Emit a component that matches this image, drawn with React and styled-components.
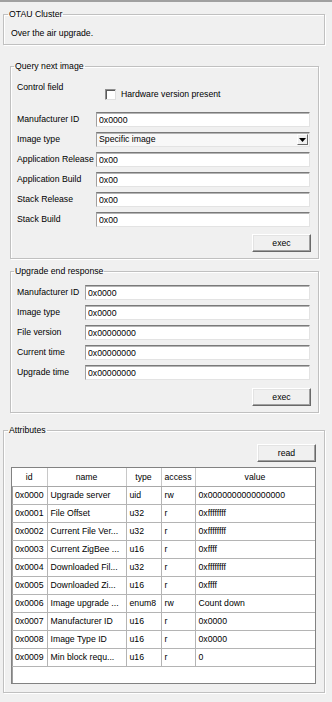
import React from 'react';
import styled, { createGlobalStyle } from 'styled-components';

const FONT = '"Liberation Sans", Arial, sans-serif';
const SIZE = '8.7px';

const Global = createGlobalStyle`
  html, body { margin: 0; padding: 0; background: #f0f0f0; }
  body { font-family: ${FONT}; font-size: ${SIZE}; color: #000; }
  * { box-sizing: border-box; }
`;

const Page = styled.div`
  width: 332px;
  height: 702px;
  border-top: 2px solid #a0a0a0;
  padding: 0 7px 0 3px;
  display: flex;
  flex-direction: column;
  overflow: hidden;
`;

const Group = styled.fieldset`
  margin: ${p => p.$mt}px ${p => p.$mx || 0}px 0 ${p => p.$mx ? p.$mx + 1 : 0}px;
  padding: ${p => p.$pad};
  border: 1px solid #c0c0c0;
  box-shadow: inset 1px 1px 0 #fff, 1px 1px 0 #fff;
  min-width: 0;
`;

const Legend = styled.legend`
  padding: 0 1px;
  margin-left: -3px;
  font-size: ${SIZE};
  line-height: 11px;
`;

const Text = styled.div`
  line-height: 11px;
`;

const Form = styled.div`
  display: grid;
  grid-template-columns: ${p => p.$label}px 1fr;
  row-gap: 5px;
  align-items: center;
`;

const Label = styled.span`
  line-height: 11px;
  white-space: nowrap;
  align-self: ${p => p.$top ? 'start' : 'center'};
`;

const CheckCell = styled.label`
  display: flex;
  align-items: center;
  gap: 5px;
  height: 25px;
  margin-left: 9px;
  line-height: 11px;
`;

const CheckBox = styled.span`
  width: 11px;
  height: 11px;
  background: #fff;
  border: 1px solid;
  border-color: #8e8e8e #e0e0e0 #e0e0e0 #8e8e8e;
  box-shadow: inset 1px 1px 0 #5a5a5a;
`;

const TextField = styled.input`
  width: 100%;
  height: 15px;
  margin: 0;
  padding: 0 2px;
  font-family: ${FONT};
  font-size: ${SIZE};
  color: #000;
  background: #fff;
  border: 1px solid;
  border-color: #7a7a7a #e3e3e3 #e3e3e3 #a0a0a0;
  box-shadow: inset 0 1px 0 #b4b4b4;
  outline: none;
`;

const Combo = styled.div`
  height: 15px;
  display: flex;
  align-items: center;
  justify-content: space-between;
  padding: 0 1px 0 2px;
  background: #f8f8f8;
  border: 1px solid;
  border-color: #7a7a7a #e3e3e3 #e3e3e3 #a0a0a0;
  box-shadow: inset 0 1px 0 #b4b4b4;
  line-height: 11px;
`;

const DropButton = styled.span`
  width: 11px;
  height: 11px;
  display: flex;
  align-items: center;
  justify-content: center;
  background: #f0f0f0;
  border: 1px solid;
  border-color: #fff #696969 #696969 #fff;
`;

const ButtonRow = styled.div`
  grid-column: 1 / -1;
  display: flex;
  justify-content: flex-end;
  margin: ${p => p.$m || '2px -1px 0 0'};
`;

const Button = styled.button`
  width: 59px;
  height: 18px;
  margin: 0;
  padding: 0;
  font-family: ${FONT};
  font-size: ${SIZE};
  color: #000;
  background: #f0f0f0;
  border: 1px solid;
  border-color: #fff #696969 #696969 #fff;
  box-shadow: inset -1px -1px 0 #a0a0a0, inset 1px 1px 0 #e3e3e3;
`;

const TableFrame = styled.div`
  margin-top: 5px;
  height: 217px;
  background: #fff;
  border: 1px solid #828282;
  box-shadow: inset 1px 0 0 #a0a0a0;
  overflow: hidden;
`;

const Table = styled.table`
  border-collapse: collapse;
  table-layout: fixed;
  width: 303px;
`;

const Th = styled.th`
  height: 18px;
  padding: 0 3px;
  font-weight: normal;
  text-align: center;
  background: #fff;
  border-right: 1px solid #c8c8c8;
  border-bottom: 1px solid #a8a8a8;
  white-space: nowrap;
  overflow: hidden;
`;

const Td = styled.td`
  height: 18px;
  padding: 0 3px;
  border-right: 1px solid #b4b4b4;
  border-bottom: 1px solid #b4b4b4;
  white-space: nowrap;
  overflow: hidden;
`;

const queryFields = [
  ['Application Release', '0x00'],
  ['Application Build', '0x00'],
  ['Stack Release', '0x00'],
  ['Stack Build', '0x00'],
];

const endFields = [
  ['Manufacturer ID', '0x0000'],
  ['Image type', '0x0000'],
  ['File version', '0x00000000'],
  ['Current time', '0x00000000'],
  ['Upgrade time', '0x00000000'],
];

const rows = [
  ['0x0000', 'Upgrade server', 'uid', 'rw', '0x0000000000000000'],
  ['0x0001', 'File Offset', 'u32', 'r', '0xffffffff'],
  ['0x0002', 'Current File Ver...', 'u32', 'r', '0xffffffff'],
  ['0x0003', 'Current ZigBee ...', 'u16', 'r', '0xffff'],
  ['0x0004', 'Downloaded Fil...', 'u32', 'r', '0xffffffff'],
  ['0x0005', 'Downloaded Zi...', 'u16', 'r', '0xffff'],
  ['0x0006', 'Image upgrade ...', 'enum8', 'rw', 'Count down'],
  ['0x0007', 'Manufacturer ID', 'u16', 'r', '0x0000'],
  ['0x0008', 'Image Type ID', 'u16', 'r', '0x0000'],
  ['0x0009', 'Min block requ...', 'u16', 'r', '0'],
];

const cols = [35, 79, 35, 34, 120];

export default function App() {
  return (
    <>
      <Global />
      <Page>
        <Group $mt={7} $pad="8px 6px 5px 7px">
          <Legend>OTAU Cluster</Legend>
          <Text>Over the air upgrade.</Text>
        </Group>

        <Group $mt={16} $mx={6} $pad="10px 8px 6px 6px">
          <Legend>Query next image</Legend>
          <Form $label={79}>
            <Label $top>Control field</Label>
            <CheckCell>
              <CheckBox />
              <span>Hardware version present</span>
            </CheckCell>
            <Label>Manufacturer ID</Label>
            <TextField defaultValue="0x0000" />
            <Label>Image type</Label>
            <Combo>
              <span>Specific image</span>
              <DropButton>
                <svg width="7" height="4" viewBox="0 0 7 4"><path d="M0 0h7L3.5 4z" fill="#000" /></svg>
              </DropButton>
            </Combo>
            {queryFields.map(([l, v]) => (
              <React.Fragment key={l}>
                <Label>{l}</Label>
                <TextField defaultValue={v} />
              </React.Fragment>
            ))}
            <ButtonRow><Button>exec</Button></ButtonRow>
          </Form>
        </Group>

        <Group $mt={7} $mx={6} $pad="8px 8px 6px 6px">
          <Legend>Upgrade end response</Legend>
          <Form $label={68}>
            {endFields.map(([l, v]) => (
              <React.Fragment key={l}>
                <Label>{l}</Label>
                <TextField defaultValue={v} />
              </React.Fragment>
            ))}
            <ButtonRow $m="3px -1px 0 0"><Button>exec</Button></ButtonRow>
          </Form>
        </Group>

        <Group $mt={12} $pad="8px 8px 8px 7px">
          <Legend>Attributes</Legend>
          <ButtonRow $m="0"><Button>read</Button></ButtonRow>
          <TableFrame>
            <Table>
              <colgroup>
                {cols.map((w, i) => <col key={i} style={{ width: w }} />)}
              </colgroup>
              <thead>
                <tr>
                  <Th>id</Th><Th>name</Th><Th>type</Th><Th>access</Th><Th>value</Th>
                </tr>
              </thead>
              <tbody>
                {rows.map(r => (
                  <tr key={r[0]}>
                    {r.map((c, i) => <Td key={i}>{c}</Td>)}
                  </tr>
                ))}
              </tbody>
            </Table>
          </TableFrame>
        </Group>
      </Page>
    </>
  );
}
